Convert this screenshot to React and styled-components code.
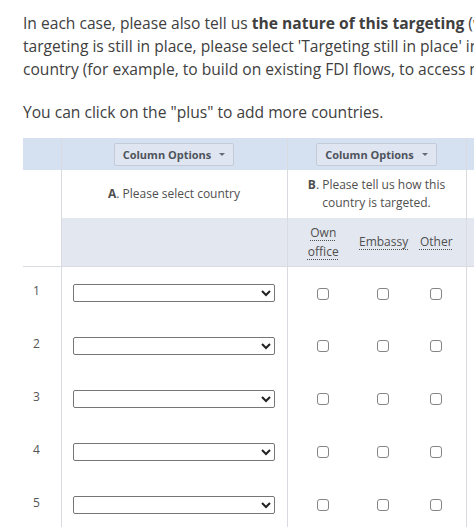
import React from "react";
import styled, { createGlobalStyle } from "styled-components";

const GlobalStyle = createGlobalStyle`
  html, body {
    margin: 0;
    padding: 0;
    background: #ffffff;
    overflow: hidden;
  }
  body {
    font-family: "Open Sans", "Liberation Sans", sans-serif;
  }
`;

const Page = styled.div`
  width: 474px;
  height: 527px;
  overflow: hidden;
  padding: 12px 0 0 23px;
  box-sizing: border-box;
`;

const Intro = styled.p`
  margin: 0;
  font-size: 15.6px;
  line-height: 23px;
  color: #404040;
  white-space: nowrap;
`;

const Note = styled(Intro)`
  margin-top: 20px;
`;

const Grid = styled.table`
  margin-top: 14px;
  border-collapse: collapse;
  table-layout: fixed;
  width: 520px;
  font-size: 12px;
  color: #4f4f4f;
`;

const HeadRow = styled.tr`
  background: ${(p) => p.$bg || "#ffffff"};
  height: ${(p) => p.$h}px;
`;

const Cell = styled.td`
  padding: 0;
  vertical-align: middle;
  text-align: center;
  border-right: ${(p) => (p.$edge ? "1px solid #d9dbe0" : "none")};
  background: ${(p) => p.$bg || "transparent"};
  line-height: 18px;
`;

const NumCell = styled(Cell)`
  text-align: left;
  padding-left: 10px;
  padding-bottom: 4px;
  color: #555555;
`;

const OptionsButton = styled.button`
  display: inline-flex;
  align-items: center;
  gap: 8px;
  height: 23px;
  padding: 0 8px;
  border: 1px solid #c3cbd8;
  border-radius: 2px;
  background: #dfe6f1;
  font-family: "Open Sans", "Liberation Sans", sans-serif;
  font-weight: 700;
  font-size: 11px;
  color: #4e535c;
`;

const Caret = styled.span`
  width: 0;
  height: 0;
  border-left: 3.5px solid transparent;
  border-right: 3.5px solid transparent;
  border-top: 3.5px solid #666c75;
  margin-top: 1px;
`;

const Choice = styled.span`
  display: inline-block;
  text-decoration: underline dotted;
  text-underline-offset: 3px;
  line-height: 19px;
  color: #4f4f4f;
`;

const DataRow = styled.tr`
  height: 53px;
  border-top: ${(p) => (p.$first ? "1px solid #d9dbe0" : "none")};
`;

const CountrySelect = styled.select`
  display: block;
  width: 202px;
  height: 18px;
  margin: 0 auto;
  font-size: 12px;
  border: 1px solid #767676;
  border-radius: 2px;
  background: #ffffff;
  color: #222;
`;

const Box = styled.input.attrs({ type: "checkbox" })`
  appearance: none;
  display: inline-block;
  vertical-align: middle;
  width: 12px;
  height: 12px;
  margin: 0;
  border: 1px solid #858585;
  border-radius: 3px;
  background: #ffffff;
`;

const rows = [1, 2, 3, 4, 5];

export default function App() {
  return (
    <>
      <GlobalStyle />
      <Page>
        <Intro>
          In each case, please also tell us <b>the nature of this targeting</b>{" "}
          (whether it is current or historic). If
          <br />
          targeting is still in place, please select 'Targeting still in place' in
          the relevant column.
          <br />
          country (for example, to build on existing FDI flows, to access new
          markets).
        </Intro>
        <Note>You can click on the "plus" to add more countries.</Note>

        <Grid>
          <colgroup>
            <col style={{ width: 38 }} />
            <col style={{ width: 226 }} />
            <col style={{ width: 72 }} />
            <col style={{ width: 48 }} />
            <col style={{ width: 59 }} />
            <col style={{ width: 77 }} />
          </colgroup>
          <tbody>
            <HeadRow $bg="#d5e0f1" $h={32}>
              <Cell $edge />
              <Cell $edge>
                <OptionsButton>
                  Column Options <Caret />
                </OptionsButton>
              </Cell>
              <Cell $edge colSpan={3}>
                <OptionsButton>
                  Column Options <Caret />
                </OptionsButton>
              </Cell>
              <Cell />
            </HeadRow>
            <HeadRow $h={48}>
              <Cell $edge />
              <Cell $edge>
                <b>A</b>. Please select country
              </Cell>
              <Cell $edge colSpan={3}>
                <b>B</b>. Please tell us how this
                <br />
                country is targeted.
              </Cell>
              <Cell />
            </HeadRow>
            <HeadRow $h={48}>
              <Cell $edge />
              <Cell $edge $bg="#e3e7ef" />
              <Cell $bg="#e3e7ef">
                <Choice>
                  Own
                  <br />
                  office
                </Choice>
              </Cell>
              <Cell $bg="#e3e7ef">
                <Choice>Embassy</Choice>
              </Cell>
              <Cell $edge $bg="#e3e7ef">
                <Choice>Other</Choice>
              </Cell>
              <Cell $bg="#e3e7ef" />
            </HeadRow>
            {rows.map((n) => (
              <DataRow key={n} $first={n === 1}>
                <NumCell $edge>{n}</NumCell>
                <Cell $edge>
                  <CountrySelect defaultValue="">
                    <option value=""></option>
                  </CountrySelect>
                </Cell>
                <Cell>
                  <Box />
                </Cell>
                <Cell>
                  <Box />
                </Cell>
                <Cell $edge>
                  <Box />
                </Cell>
                <Cell />
              </DataRow>
            ))}
          </tbody>
        </Grid>
      </Page>
    </>
  );
}
